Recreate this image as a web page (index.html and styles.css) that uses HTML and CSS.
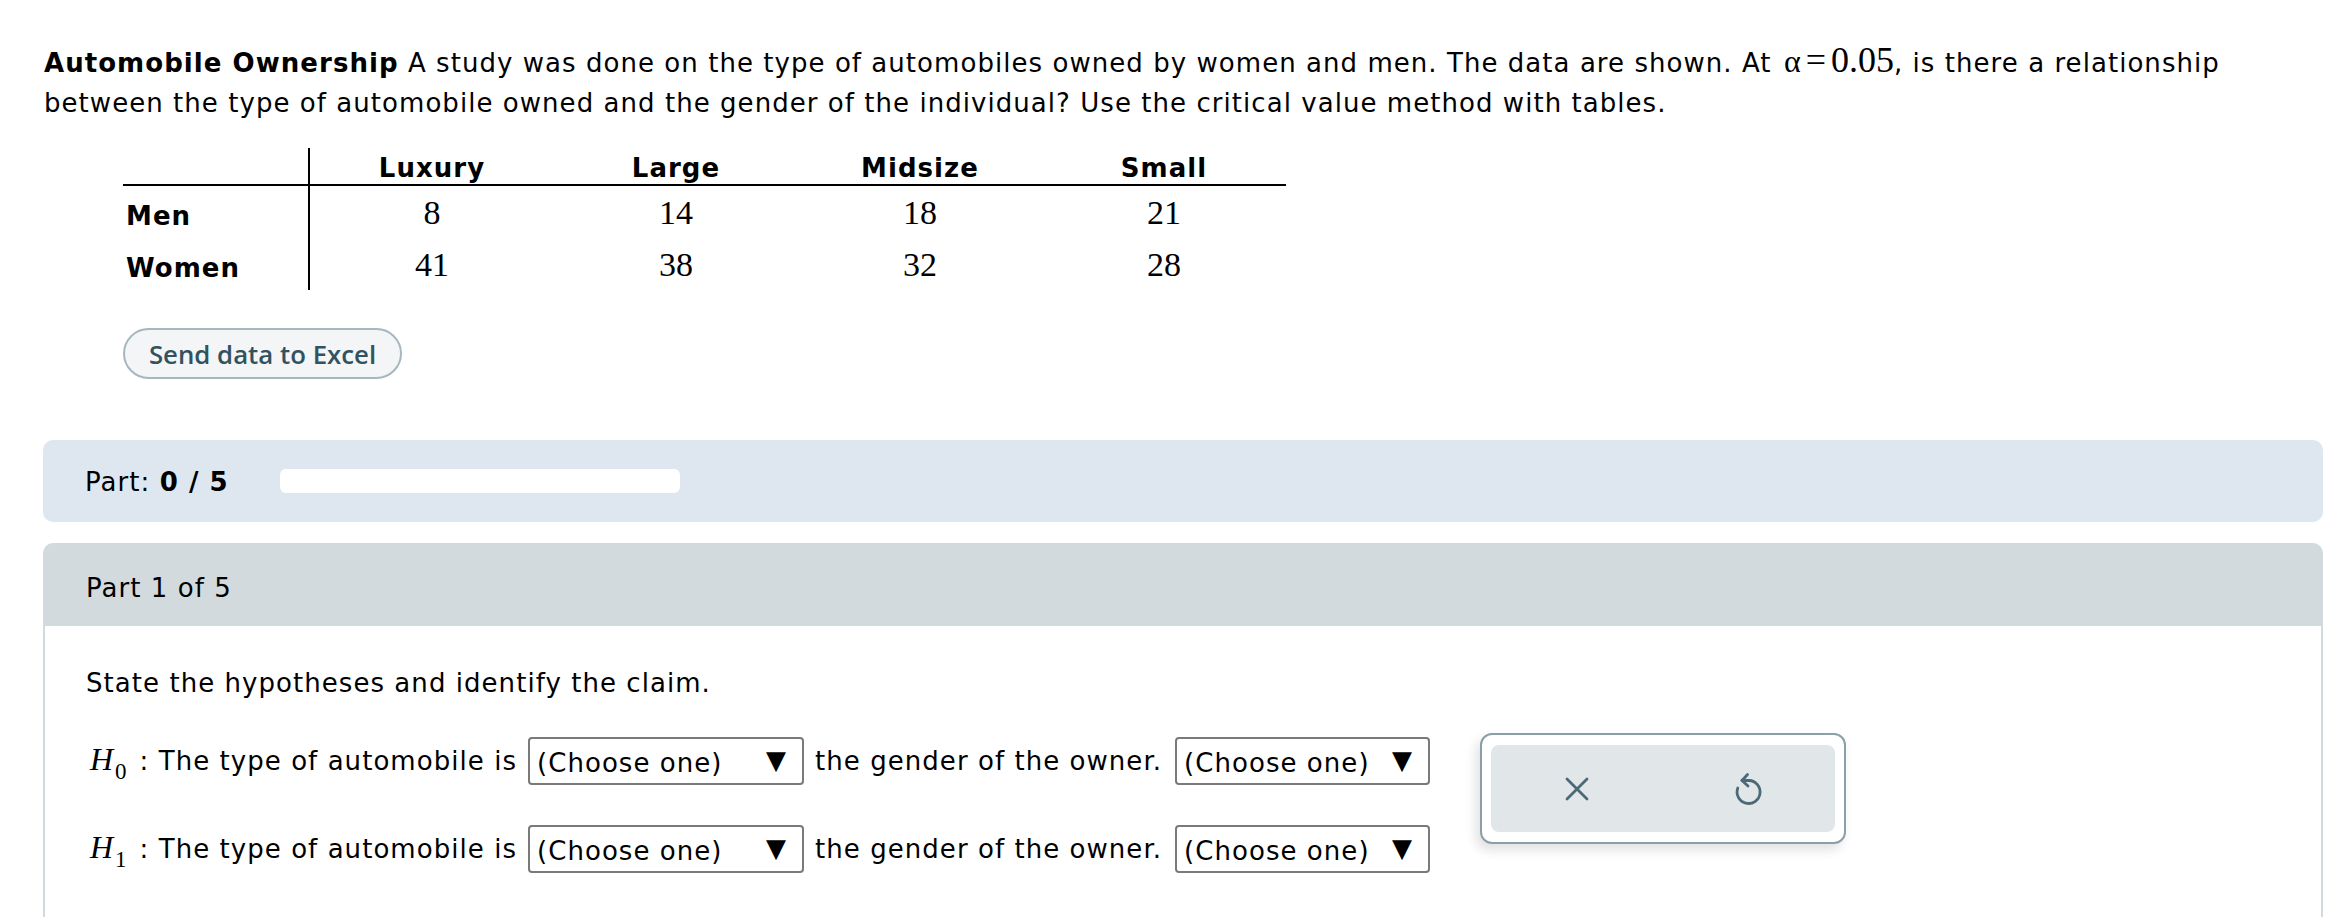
FILE: index.html
```html
<!DOCTYPE html>
<html>
<head>
<meta charset="utf-8">
<title>Automobile Ownership</title>
<link rel="stylesheet" href="styles.css">
</head>
<body>
<div class="page">
  <p class="question"><b>Automobile Ownership</b> A study was done on the type of automobiles owned by women and men. The data are shown. At <span class="math"><span class="alpha">α</span><span class="eq">=</span>0.05</span>, is there a relationship between the type of automobile owned and the gender of the individual? Use the critical value method with tables.</p>

  <table class="data">
    <tr class="head">
      <th class="lab"></th>
      <th>Luxury</th>
      <th>Large</th>
      <th>Midsize</th>
      <th>Small</th>
    </tr>
    <tr>
      <th class="lab">Men</th>
      <td>8</td>
      <td>14</td>
      <td>18</td>
      <td>21</td>
    </tr>
    <tr>
      <th class="lab">Women</th>
      <td>41</td>
      <td>38</td>
      <td>32</td>
      <td>28</td>
    </tr>
  </table>

  <button class="excel">Send data to Excel</button>

  <div class="progress">
    <span class="progress-label">Part: <b>0 / 5</b></span>
    <span class="progress-bar"></span>
  </div>

  <div class="part">
    <div class="part-head">Part 1 of 5</div>
    <div class="part-body">
      <p class="prompt">State the hypotheses and identify the claim.</p>
      <div class="answer">
        <div class="hyps">
          <div class="hyp">
            <span class="hvar">H<span class="hsub">0</span></span>
            <span class="htext">: The type of automobile is</span>
            <span class="select wide"><span>(Choose one)</span><span class="arrow">▼</span></span>
            <span class="htext">the gender of the owner.</span>
            <span class="select narrow"><span>(Choose one)</span><span class="arrow">▼</span></span>
          </div>
          <div class="hyp">
            <span class="hvar">H<span class="hsub">1</span></span>
            <span class="htext">: The type of automobile is</span>
            <span class="select wide"><span>(Choose one)</span><span class="arrow">▼</span></span>
            <span class="htext">the gender of the owner.</span>
            <span class="select narrow"><span>(Choose one)</span><span class="arrow">▼</span></span>
          </div>
        </div>
        <div class="actions">
          <div class="actions-inner">
            <span class="act">
              <svg width="26" height="26" viewBox="0 0 26 26"><path d="M3 3 L23 23 M23 3 L3 23" stroke="#4b6977" stroke-width="2.8" stroke-linecap="round" fill="none"/></svg>
            </span>
            <span class="act">
              <svg width="32" height="36" viewBox="0 0 32 36"><path d="M16 9.5 A11.5 11.5 0 1 1 4.8 17" stroke="#4b6977" stroke-width="2.8" stroke-linecap="round" fill="none"/><path d="M14.5 3.5 L9 9.5 L15 15" stroke="#4b6977" stroke-width="2.8" stroke-linecap="round" stroke-linejoin="round" fill="none"/><path d="M9 9.5 H16" stroke="#4b6977" stroke-width="2.8" stroke-linecap="round"/></svg>
            </span>
          </div>
        </div>
      </div>
    </div>
  </div>
</div>
</body>
</html>
```

FILE: styles.css
```css
html, body {
  margin: 0;
  padding: 0;
  background: #ffffff;
}

body {
  font-family: "DejaVu Sans", Verdana, sans-serif;
  font-size: 26px;
  letter-spacing: 1.05px;
  color: #000000;
}

.page {
  padding: 43px 3px 0 43px;
}

.question {
  margin: 0 0 0 1px;
  line-height: 40px;
}

.math {
  font-family: "Liberation Serif", "Times New Roman", serif;
  font-size: 36px;
  letter-spacing: 0;
  line-height: 0;
  margin: 0 0 0 3px;
}

.alpha {
  font-size: 32px;
}

.eq {
  margin: 0 5px;
}

.data {
  border-collapse: collapse;
  margin: 25px 0 0 80px;
}

.data th,
.data td {
  padding: 0;
  vertical-align: top;
}

.data .lab {
  width: 182px;
  text-align: left;
  padding-left: 3px;
  border-right: 2px solid #000;
}

.data th {
  font-weight: bold;
  line-height: 30px;
  padding-top: 15px;
  height: 37px;
}

.data .head th {
  width: 244px;
  text-align: center;
  padding-top: 5px;
  height: 31px;
  border-bottom: 2px solid #000;
}

.data .head th.lab {
  width: 182px;
}

.data td {
  width: 244px;
  text-align: center;
  font-family: "Liberation Serif", "Times New Roman", serif;
  font-size: 34px;
  letter-spacing: 0;
  line-height: 38px;
  padding-top: 8px;
  height: 44px;
}

.excel {
  display: block;
  margin: 38px 0 0 80px;
  width: 279px;
  height: 51px;
  box-sizing: border-box;
  border: 2px solid #a8b7bf;
  border-radius: 26px;
  background: #f3f5f7;
  color: #31525f;
  font-family: "Open Sans", Lato, sans-serif;
  font-weight: 600;
  font-size: 25.8px;
  padding: 0;
  letter-spacing: 0;
}

.progress {
  margin-top: 61px;
  height: 82px;
  border-radius: 10px;
  background: #dee7ef;
  display: flex;
  align-items: center;
  padding-left: 42px;
}

.progress-label {
  width: 195px;
  white-space: nowrap;
  position: relative;
  top: 1px;
}

.progress-bar {
  display: block;
  width: 400px;
  height: 24px;
  background: #ffffff;
  border-radius: 6px;
}

.part {
  margin-top: 21px;
}

.part-head {
  height: 83px;
  box-sizing: border-box;
  padding-top: 7px;
  background: #d3dadd;
  border-radius: 10px 10px 0 0;
  display: flex;
  align-items: center;
  padding-left: 43px;
}

.part-body {
  border-left: 2px solid #d3dadd;
  border-right: 2px solid #d3dadd;
  padding: 37px 0 0 41px;
  min-height: 400px;
}

.prompt {
  margin: 0 0 34px 0;
  line-height: 40px;
}

.answer {
  display: flex;
  align-items: flex-start;
}

.hyps {
  display: flex;
  flex-direction: column;
  gap: 40px;
}

.hyp {
  display: flex;
  align-items: center;
  height: 48px;
  gap: 11px;
}

.hvar {
  font-family: "Liberation Serif", "Times New Roman", serif;
  font-style: italic;
  font-size: 32px;
  letter-spacing: 0;
  margin-left: 4px;
  margin-right: 2px;
  position: relative;
  top: -2px;
}

.hsub {
  font-style: normal;
  font-size: 23px;
  position: relative;
  top: 9px;
  margin-left: 2px;
}

.htext {
  white-space: nowrap;
}

.select {
  display: flex;
  align-items: center;
  justify-content: space-between;
  box-sizing: border-box;
  height: 48px;
  border: 2px solid #7a7a7a;
  border-radius: 4px;
  padding: 4px 16px 0 7px;
  white-space: nowrap;
}

.select.wide {
  width: 276px;
}

.select.narrow {
  width: 255px;
  margin-left: 2px;
}

.arrow {
  font-size: 26px;
  letter-spacing: 0;
  position: relative;
  top: -3px;
}

.actions {
  margin-left: 50px;
  margin-top: -4px;
  width: 366px;
  height: 111px;
  box-sizing: border-box;
  border: 2px solid #8b9fa8;
  border-radius: 12px;
  background: #ffffff;
  padding: 10px 9px;
  box-shadow: -4px 6px 12px rgba(0, 0, 0, 0.12);
}

.actions-inner {
  height: 100%;
  background: #e1e6e9;
  border-radius: 8px;
  display: flex;
}

.act {
  flex: 1;
  display: flex;
  align-items: center;
  justify-content: center;
}
```
